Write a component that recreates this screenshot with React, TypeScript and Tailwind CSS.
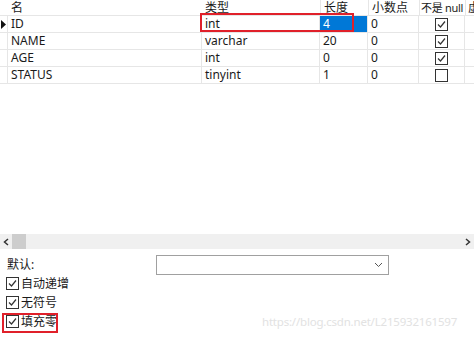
import React from "react";

const font = { fontFamily: '"Noto Sans", "Noto Sans CJK SC", sans-serif' };

function Check({ checked }: { checked: boolean }) {
  return (
    <svg width="13" height="13" viewBox="0 0 13 13" className="shrink-0">
      <rect x="0.5" y="0.5" width="12" height="12" fill="white" stroke="#333" strokeWidth="1" />
      {checked && <path d="M3 6.5 L5.5 9 L10 3.5" fill="none" stroke="#333" strokeWidth="1.2" />}
    </svg>
  );
}

const cols = "grid-cols-[8px_194px_118px_48px_51px_46px_minmax(0,1fr)]";

const rows = [
  { name: "ID", type: "int", len: "4", dec: "0", nn: true },
  { name: "NAME", type: "varchar", len: "20", dec: "0", nn: true },
  { name: "AGE", type: "int", len: "0", dec: "0", nn: true },
  { name: "STATUS", type: "tinyint", len: "1", dec: "0", nn: false },
];

export default function App() {
  return (
    <div
      className="relative w-[474px] h-[341px] bg-white text-[12px] leading-[16px] text-[#1a1a1a] overflow-hidden whitespace-nowrap"
      style={font}
    >
      <div className="h-[234px] flex flex-col">
        <div className={`grid ${cols} h-[16px] items-stretch border-b border-[#e6e6e6] overflow-hidden`}>
          <div />
          <div className="pl-[3px] flex items-center">名</div>
          <div className="pl-[3px] flex items-center">类型</div>
          <div className="pl-[3px] border-l border-[#e6e6e6] flex items-center">长度</div>
          <div className="pl-[3px] border-l border-[#e6e6e6] flex items-center">小数点</div>
          <div className="pl-[1px] border-l border-[#e6e6e6] flex items-center text-[11px] tracking-[-0.3px]">
            不是 null
          </div>
          <div className="pl-[2px] border-l border-[#e6e6e6] flex items-center overflow-hidden">虚</div>
        </div>
        {rows.map((r, i) => (
          <div key={r.name} className={`grid ${cols} h-[17px] items-stretch border-b border-[#e6e6e6]`}>
            <div className="border-r border-[#e6e6e6] flex items-center justify-center">
              {i === 0 && (
                <svg width="5" height="9" viewBox="0 0 5 9">
                  <path d="M0 0 L5 4.5 L0 9 Z" fill="#111" />
                </svg>
              )}
            </div>
            <div className="pl-[3px] flex items-center border-r border-[#e6e6e6]">{r.name}</div>
            <div className="pl-[3px] flex items-center border-r border-[#e6e6e6]">{r.type}</div>
            <div
              className={`pl-[3px] flex items-center border-r border-[#e6e6e6] ${
                i === 0 ? "bg-[#0078d7] text-white" : ""
              }`}
            >
              {r.len}
            </div>
            <div className="pl-[3px] flex items-center border-r border-[#e6e6e6]">{r.dec}</div>
            <div className="flex items-center justify-center border-r border-[#e6e6e6]">
              <Check checked={r.nn} />
            </div>
            <div />
          </div>
        ))}
      </div>

      <div className="h-[15px] bg-[#f0f0f0] flex items-center">
        <span className="w-[12px] flex justify-center">
          <svg width="6" height="8" viewBox="0 0 6 8">
            <path d="M5 1 L1.5 4 L5 7" fill="none" stroke="#333" strokeWidth="1.5" />
          </svg>
        </span>
        <div className="w-[14px] h-[15px] bg-[#cdcdcd]" />
        <div className="flex-1" />
        <span className="w-[12px] flex justify-center">
          <svg width="6" height="8" viewBox="0 0 6 8">
            <path d="M1 1 L4.5 4 L1 7" fill="none" stroke="#333" strokeWidth="1.5" />
          </svg>
        </span>
      </div>

      <div className="flex items-center h-[20px] mt-[6px]">
        <span className="w-[156px] pl-[7px]">默认:</span>
        <div className="w-[233px] h-[20px] border border-[#a0a0a0] flex items-center justify-end pr-[5px]">
          <svg width="9" height="6" viewBox="0 0 9 6">
            <path d="M1 1 L4.5 4.5 L8 1" fill="none" stroke="#555" strokeWidth="1" />
          </svg>
        </div>
      </div>

      <div className="flex flex-col gap-[6px] mt-[2px] pl-[6px]">
        <div className="flex items-center gap-[2px] h-[13px]">
          <Check checked />
          <span>自动递增</span>
        </div>
        <div className="flex items-center gap-[2px] h-[13px]">
          <Check checked />
          <span>无符号</span>
        </div>
        <div className="flex items-center gap-[2px] h-[13px]">
          <Check checked />
          <span>填充零</span>
        </div>
      </div>

      <div className="absolute left-[200px] top-[13px] w-[154px] h-[19px] border-2 border-[#e0202a]" />
      <div className="absolute left-[2px] top-[313px] w-[56px] h-[20px] border-2 border-[#e0202a]" />
      <div className="absolute left-[262px] top-[314px] text-[11.5px] leading-[16px] tracking-[-0.2px] text-[#e2e2e2]">
        https://blog.csdn.net/L215932161597
      </div>
    </div>
  );
}
